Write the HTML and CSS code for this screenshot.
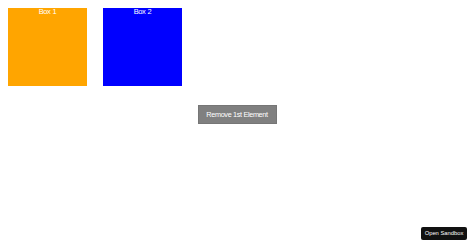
FILE: index.html
```html
<!DOCTYPE html>
<html>
<head>
<meta charset="utf-8">
<link rel="stylesheet" href="styles.css">
</head>
<body>
<div class="boxes">
  <div class="box orange">Box 1</div>
  <div class="box blue">Box 2</div>
</div>
<div class="actions">
  <button class="remove">Remove 1st Element</button>
</div>
<a class="sandbox">Open Sandbox</a>
</body>
</html>
```
FILE: styles.css
```css
html, body { height: 100%; }
body {
  margin: 8px;
  font-family: "Liberation Sans", Arial, sans-serif;
  background: #fff;
  position: relative;
}
.boxes {
  display: flex;
  gap: 16px;
}
.box {
  width: 79px;
  height: 78px;
  color: #fff;
  font-size: 7.5px;
  letter-spacing: -0.4px;
  word-spacing: 0.5px;
  text-align: center;
  line-height: 7px;
}
.orange { background: #ffa500; }
.blue { background: #0000ff; }
.actions {
  display: flex;
  justify-content: center;
  margin-top: 19px;
}
.remove {
  width: 79px;
  height: 19px;
  background: #808080;
  color: #fff;
  border: 1px solid #767676;
  font-family: "Liberation Sans", Arial, sans-serif;
  font-size: 7.3px;
  letter-spacing: -0.35px;
  padding: 0;
}
.sandbox {
  position: fixed;
  right: 7px;
  bottom: 8px;
  width: 46px;
  height: 13px;
  background: #111;
  color: #fff;
  font-size: 5.8px;
  line-height: 13px;
  text-align: center;
  border-radius: 2px;
}
```
